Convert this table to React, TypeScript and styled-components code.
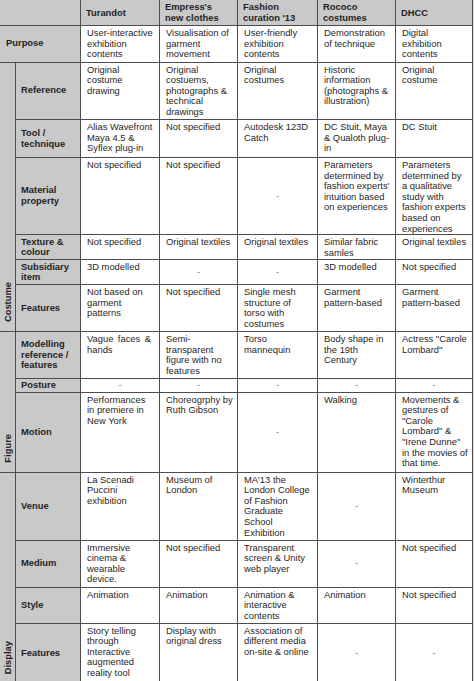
import styled, { createGlobalStyle } from "styled-components";

const GlobalStyle = createGlobalStyle`
  html, body {
    margin: 0;
    padding: 0;
    background: #dedede;
  }
  body {
    font-family: "Liberation Sans", Arial, Helvetica, sans-serif;
    overflow: hidden;
  }
`;

// null renders as a centred dash
type CellValue = string[] | null;

interface RowData {
  label: string[];
  height: number;
  cells: CellValue[];
  justify?: number; // index of a cell whose text is justified
}

interface Group {
  name: string;
  rows: RowData[];
}

const columns = [16, 65, 79, 78, 80, 78, 77];
const headers = [["Turandot"], ["Empress's", "new clothes"], ["Fashion", "curation '13"], ["Rococo", "costumes"], ["DHCC"]];

const purpose: CellValue[] = [
  ["User-interactive", "exhibition", "contents"],
  ["Visualisation of", "garment", "movement"],
  ["User-friendly", "exhibition", "contents"],
  ["Demonstration", "of technique"],
  ["Digital", "exhibition", "contents"],
];

const groups: Group[] = [
  {
    name: "Costume",
    rows: [
      {
        label: ["Reference"],
        height: 57.5,
        cells: [
          ["Original", "costume", "drawing"],
          ["Original", "costuems,", "photographs &", "technical", "drawings"],
          ["Original", "costumes"],
          ["Historic", "information", "(photographs &", "illustration)"],
          ["Original", "costume"],
        ],
      },
      {
        label: ["Tool /", "technique"],
        height: 38,
        cells: [
          ["Alias Wavefront", "Maya 4.5 &", "Syflex plug-in"],
          ["Not specified"],
          ["Autodesk 123D", "Catch"],
          ["DC Stuit, Maya", "& Qualoth plug-", "in"],
          ["DC Stuit"],
        ],
      },
      {
        label: ["Material", "property"],
        height: 77,
        cells: [
          ["Not specified"],
          ["Not specified"],
          null,
          ["Parameters", "determined by", "fashion experts'", "intuition based", "on experiences"],
          ["Parameters", "determined by", "a qualitative", "study with", "fashion experts", "based on", "experiences"],
        ],
      },
      {
        label: ["Texture &", "colour"],
        height: 25,
        cells: [["Not specified"], ["Original textiles"], ["Original textiles"], ["Similar fabric", "samles"], ["Original textiles"]],
      },
      {
        label: ["Subsidiary", "item"],
        height: 25,
        cells: [["3D modelled"], null, null, ["3D modelled"], ["Not specified"]],
      },
      {
        label: ["Features"],
        height: 47,
        cells: [
          ["Not based on", "garment", "patterns"],
          ["Not specified"],
          ["Single mesh", "structure of", "torso with", "costumes"],
          ["Garment", "pattern-based"],
          ["Garment", "pattern-based"],
        ],
      },
    ],
  },
  {
    name: "Figure",
    rows: [
      {
        label: ["Modelling", "reference /", "features"],
        height: 47,
        justify: 0,
        cells: [
          ["Vague faces & hands"],
          ["Semi-", "transparent", "figure with no", "features"],
          ["Torso", "mannequin"],
          ["Body shape in", "the 19th", "Century"],
          ["Actress \"Carole", "Lombard\""],
        ],
      },
      {
        label: ["Posture"],
        height: 13.5,
        cells: [null, null, null, null, null],
      },
      {
        label: ["Motion"],
        height: 80,
        cells: [
          ["Performances", "in premiere in", "New York"],
          ["Choreogrphy by", "Ruth Gibson"],
          null,
          ["Walking"],
          ["Movements &", "gestures of", "\"Carole", "Lombard\" &", "\"Irene Dunne\"", "in the movies of", "that time."],
        ],
      },
    ],
  },
  {
    name: "Display",
    rows: [
      {
        label: ["Venue"],
        height: 68,
        cells: [
          ["La Scenadi", "Puccini", "exhibition"],
          ["Museum of", "London"],
          ["MA'13 the", "London College", "of Fashion", "Graduate", "School", "Exhibition"],
          null,
          ["Winterthur", "Museum"],
        ],
      },
      {
        label: ["Medium"],
        height: 47,
        cells: [
          ["Immersive", "cinema &", "wearable", "device."],
          ["Not specified"],
          ["Transparent", "screen & Unity", "web player"],
          null,
          ["Not specified"],
        ],
      },
      {
        label: ["Style"],
        height: 36,
        cells: [["Animation"], ["Animation"], ["Animation &", "interactive", "contents"], ["Animation"], ["Not specified"]],
      },
      {
        label: ["Features"],
        height: 60,
        cells: [
          ["Story telling", "through", "Interactive", "augmented", "reality tool"],
          ["Display with", "original dress"],
          ["Association of", "different media", "on-site & online"],
          null,
          null,
        ],
      },
    ],
  },
];

const Lines = ({ lines }: { lines: string[] }) => (
  <>
    {lines.map((line, i) => (
      <span key={i}>
        {i > 0 && <br />}
        {line}
      </span>
    ))}
  </>
);

const DataCells = ({ cells, justify }: { cells: CellValue[]; justify?: number }) => (
  <>
    {cells.map((cell, i) =>
      cell === null ? (
        <DashCell key={i}>-</DashCell>
      ) : (
        <Cell key={i} $justify={justify === i}>
          {justify === i ? cell.join(" ") : <Lines lines={cell} />}
        </Cell>
      )
    )}
  </>
);

const App = () => {
  return (
    <>
      <GlobalStyle />
      <Table>
        <colgroup>
          {columns.map((w, i) => (
            <col key={i} style={{ width: w }} />
          ))}
        </colgroup>
        <tbody>
          <Row $h={28}>
            <HeadCell colSpan={2} />
            {headers.map((h, i) => (
              <HeadCell key={i}>
                <Lines lines={h} />
              </HeadCell>
            ))}
          </Row>
          <Row $h={36.5}>
            <LabelCell colSpan={2} $wide>
              Purpose
            </LabelCell>
            <DataCells cells={purpose} />
          </Row>
          {groups.map((group) =>
            group.rows.map((row, i) => (
              <Row key={group.name + i} $h={row.height}>
                {i === 0 && (
                  <GroupCell rowSpan={group.rows.length}>
                    <GroupText>{group.name}</GroupText>
                  </GroupCell>
                )}
                <LabelCell>
                  <Lines lines={row.label} />
                </LabelCell>
                <DataCells cells={row.cells} justify={row.justify} />
              </Row>
            ))
          )}
        </tbody>
      </Table>
    </>
  );
};

const Table = styled.table`
  table-layout: fixed;
  border-collapse: collapse;
  width: 473px;
  margin: -3px 0 0 -1px;
  font-size: 9.4px;
  line-height: 10.6px;
  color: #1f1f1f;
  background: #fff;

  td {
    border: 1px solid #4d4d4d;
  }
`;

const Row = styled.tr<{ $h: number }>`
  height: ${(p) => p.$h}px;
`;

const HeadCell = styled.td`
  background: #c9c9c9;
  font-weight: bold;
  vertical-align: middle;
  padding: 3px 5px 0;
  white-space: nowrap;
`;

const LabelCell = styled.td<{ $wide?: boolean }>`
  background: #c9c9c9;
  font-weight: bold;
  vertical-align: middle;
  padding: 0 4px 0 ${(p) => (p.$wide ? 6 : 5)}px;
  white-space: nowrap;
`;

const GroupCell = styled.td`
  background: #c9c9c9;
  vertical-align: bottom;
  text-align: center;
  padding: 0 0 6px;
`;

const GroupText = styled.span`
  display: inline-block;
  writing-mode: vertical-rl;
  transform: rotate(180deg);
  font-weight: bold;
  line-height: 11px;
`;

const Cell = styled.td<{ $justify?: boolean }>`
  vertical-align: top;
  padding: 2px 4px 0 6px;
  white-space: ${(p) => (p.$justify ? "normal" : "nowrap")};
  text-align: ${(p) => (p.$justify ? "justify" : "left")};
  padding-right: ${(p) => (p.$justify ? 8 : 4)}px;
`;

const DashCell = styled.td`
  vertical-align: middle;
  text-align: center;
  color: #777;
  padding: 0;
`;

export default App;
